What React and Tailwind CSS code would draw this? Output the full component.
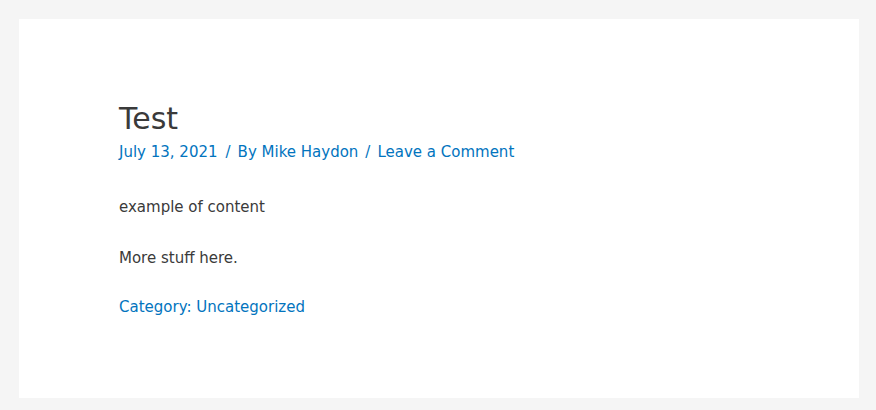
export default function App() {
  return (
    <div className="min-h-[410px] bg-[#f5f5f5] pt-[19px] pl-[19px] pr-[17px] pb-[12px]" style={{ fontFamily: '"DejaVu Sans", Verdana, sans-serif' }}>
      <article className="bg-white w-[840px] h-[379px] pl-[100px] pt-[80px]">
        <h1 className="text-[30px] leading-[40px] text-[#3a3a3a]">Test</h1>
        <div className="text-[15px] leading-[24px] text-[#0274be] mt-[1px]">
          <span>July 13, 2021</span>
          <span className="pl-[8px] pr-[7px]">/</span>
          <span>By Mike Haydon</span>
          <span className="px-[7px]">/</span>
          <span>Leave a Comment</span>
        </div>
        <div className="text-[15px] leading-[24px] text-[#3a3a3a] mt-[31px]">
          <p>example of content</p>
          <p className="mt-[27px]">More stuff here.</p>
        </div>
        <div className="text-[15px] leading-[24px] text-[#0274be] mt-[25px]">Category: Uncategorized</div>
      </article>
    </div>
  )
}
